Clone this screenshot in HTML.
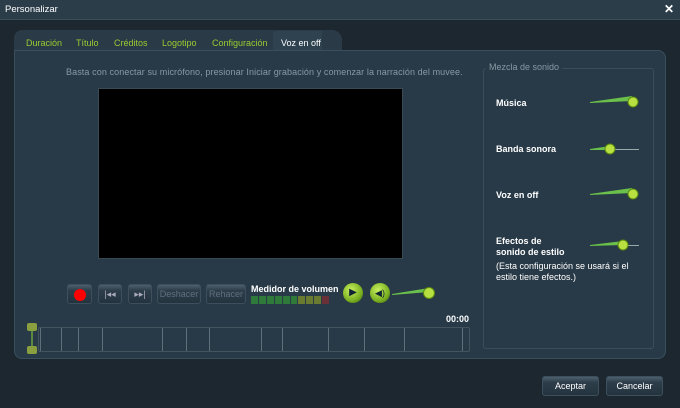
<!DOCTYPE html>
<html><head><meta charset="utf-8"><style>
*{margin:0;padding:0;box-sizing:border-box}
body{width:680px;height:408px;background:#1c2730;font-family:"Liberation Sans",sans-serif;font-size:9px;color:#fff;position:relative;overflow:hidden}
.a{position:absolute}
.title{left:0;top:0;width:680px;height:20px;background:#2c3d4a;border-bottom:1px solid #3a4d5b}
.tabs{left:14px;top:30px;width:326px;height:22px;background:#2a3a47;border-radius:8px 8px 0 0}
.tab{top:38px;color:#9acd32;font-size:9px}
.panel{left:14px;top:50px;width:652px;height:309px;background:#283a47;border:1px solid #3a4f5e;border-radius:0 8px 8px 8px}
.btn{background:linear-gradient(#4d5f6c,#2d3e4a 30%,#24343f);border:1px solid #3d4f5c;border-radius:3px;color:#5f717d;font-size:9px;text-align:center;line-height:18px}
.lbl{font-weight:bold;font-size:9px}
</style></head><body>
<div class="a title"></div>
<div class="a" style="left:5px;top:4px;font-size:9.5px">Personalizar</div>
<div class="a" style="left:664px;top:2px;font-size:12px;font-weight:bold">✕</div>
<div class="a tabs"></div>
<div class="a" style="left:273px;top:31px;width:56px;height:21px;background:#2f4250;border-radius:3px 3px 0 0"></div>
<div class="a" style="left:322px;top:30px;width:20px;height:21px;background:#2a3a47;border-radius:0 10px 0 0"></div>
<div class="a tab" style="left:26px">Duración</div>
<div class="a tab" style="left:76px">Título</div>
<div class="a tab" style="left:114px">Créditos</div>
<div class="a tab" style="left:162px">Logotipo</div>
<div class="a tab" style="left:212px">Configuración</div>
<div class="a tab" style="left:281px;color:#fff">Voz en off</div>
<div class="a panel"></div>
<div class="a" style="left:66px;top:67px;color:#8899a6;font-size:9px;letter-spacing:0.1px">Basta con conectar su micrófono, presionar Iniciar grabación y comenzar la narración del muvee.</div>
<div class="a" style="left:98px;top:88px;width:305px;height:171px;background:#000;border:1px solid #3a4a55"></div>
<div class="a btn" style="left:67px;top:284px;width:25px;height:20px"><div style="width:12px;height:12px;border-radius:50%;background:#f00;margin:4px auto"></div></div>
<div class="a btn" style="left:98px;top:284px;width:24px;height:20px;color:#aab">|◂◂</div>
<div class="a btn" style="left:128px;top:284px;width:24px;height:20px;color:#aab">▸▸|</div>
<div class="a btn" style="left:157px;top:284px;width:44px;height:20px">Deshacer</div>
<div class="a btn" style="left:206px;top:284px;width:40px;height:20px">Rehacer</div>
<div class="a lbl" style="left:251px;top:284px">Medidor de volumen</div>
<div class="a" style="left:251px;top:296px;width:78px;height:8px;display:flex;gap:1px">
<i style="flex:1;background:#2f7a3a"></i><i style="flex:1;background:#2f7a3a"></i><i style="flex:1;background:#2f7a3a"></i><i style="flex:1;background:#2f7a3a"></i><i style="flex:1;background:#2f7a3a"></i><i style="flex:1;background:#2f7a3a"></i><i style="flex:1;background:#6a7a30"></i><i style="flex:1;background:#6a7a30"></i><i style="flex:1;background:#6a7a30"></i><i style="flex:1;background:#6a3038"></i></div>
<div class="a" style="left:343px;top:283px;width:20px;height:20px;border-radius:50%;background:radial-gradient(circle at 40% 35%,#c8f060,#7ab020 60%,#3a6010);color:#123;font-size:10px;text-align:center;line-height:20px">▶</div>
<div class="a" style="left:370px;top:283px;width:20px;height:20px;border-radius:50%;background:radial-gradient(circle at 40% 35%,#c8f060,#7ab020 60%,#3a6010);color:#123;font-size:9px;text-align:center;line-height:20px">◀)</div>
<svg class="a" style="left:391px;top:284px" width="45" height="18"><polygon points="1,10 38,4 38,8 1,11" fill="#6ac04a"/><circle cx="38" cy="9" r="5.5" fill="#b8e040" stroke="#5a8a10"/></svg>
<div class="a lbl" style="left:446px;top:314px">00:00</div>
<div class="a" style="left:38px;top:327px;width:432px;height:25px;border:1px solid #44545f;border-radius:2px"></div>
<svg class="a" style="left:0;top:327px" width="480" height="25">
<g stroke="#5f6f7a" stroke-width="1">
<line x1="40.5" y1="1" x2="40.5" y2="24"/><line x1="61.5" y1="1" x2="61.5" y2="24"/><line x1="78.5" y1="1" x2="78.5" y2="24"/><line x1="102.5" y1="1" x2="102.5" y2="24"/><line x1="162.5" y1="1" x2="162.5" y2="24"/><line x1="186.5" y1="1" x2="186.5" y2="24"/><line x1="209.5" y1="1" x2="209.5" y2="24"/><line x1="261.5" y1="1" x2="261.5" y2="24"/><line x1="282.5" y1="1" x2="282.5" y2="24"/><line x1="328.5" y1="1" x2="328.5" y2="24"/><line x1="364.5" y1="1" x2="364.5" y2="24"/><line x1="404.5" y1="1" x2="404.5" y2="24"/><line x1="462.5" y1="1" x2="462.5" y2="24"/></g></svg>
<div class="a" style="left:31px;top:328px;width:2px;height:20px;background:#5a8a40"></div>
<div class="a" style="left:27px;top:323px;width:10px;height:8px;background:#8aa040;border-radius:2px"></div>
<div class="a" style="left:27px;top:346px;width:10px;height:8px;background:#8aa040;border-radius:2px"></div>
<div class="a" style="left:483px;top:68px;width:171px;height:281px;border:1px solid #3a4d5b;border-radius:3px"></div>
<div class="a" style="left:486px;top:62px;background:#283a47;padding:0 3px;color:#8899a6;font-size:9px">Mezcla de sonido</div>
<div class="a lbl" style="left:496px;top:98px">Música</div>
<div class="a lbl" style="left:496px;top:144px">Banda sonora</div>
<div class="a lbl" style="left:496px;top:190px">Voz en off</div>
<div class="a lbl" style="left:496px;top:236px;line-height:11px">Efectos de<br>sonido de estilo</div>
<div class="a" style="left:496px;top:261px;line-height:11px">(Esta configuración se usará si el<br>estilo tiene efectos.)</div>
<svg class="a" style="left:588px;top:94px" width="52" height="16"><polygon points="2,8 44,2 44,7 2,9" fill="#6ac04a"/><circle cx="45" cy="8" r="5" fill="#b8e040" stroke="#5a8a10"/></svg>
<svg class="a" style="left:588px;top:141px" width="52" height="16"><line x1="22" y1="8.5" x2="51" y2="8.5" stroke="#9aa" /><polygon points="2,8 22,5 22,9 2,9" fill="#6ac04a"/><circle cx="22" cy="8" r="5" fill="#b8e040" stroke="#5a8a10"/></svg>
<svg class="a" style="left:588px;top:186px" width="52" height="16"><polygon points="2,8 44,2 44,7 2,9" fill="#6ac04a"/><circle cx="45" cy="8" r="5" fill="#b8e040" stroke="#5a8a10"/></svg>
<svg class="a" style="left:588px;top:237px" width="52" height="16"><line x1="36" y1="8.5" x2="51" y2="8.5" stroke="#9aa" /><polygon points="2,8 35,4 35,8 2,9" fill="#6ac04a"/><circle cx="35" cy="8" r="5" fill="#b8e040" stroke="#5a8a10"/></svg>
<div class="a btn" style="left:542px;top:376px;width:57px;height:20px;color:#fff;line-height:19px">Aceptar</div>
<div class="a btn" style="left:606px;top:376px;width:57px;height:20px;color:#fff;line-height:19px">Cancelar</div>
</body></html>
